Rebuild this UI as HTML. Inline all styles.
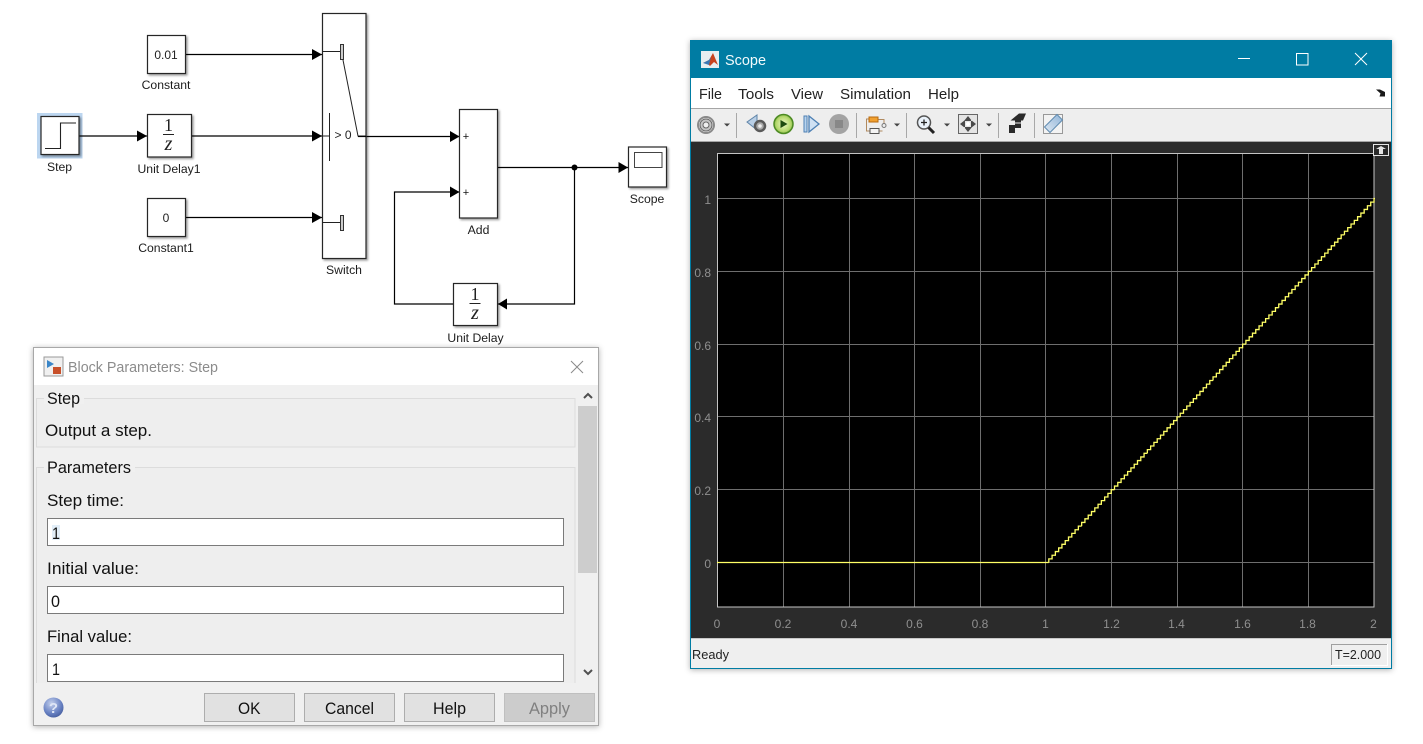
<!DOCTYPE html>
<html><head><meta charset="utf-8"><title>Scope</title>
<style>
html,body{margin:0;padding:0;background:#fff;width:1423px;height:744px;overflow:hidden}
svg{display:block}
text{font-family:"Liberation Sans",sans-serif}
.l{font-size:12.2px;fill:#1c1c1c;text-anchor:middle}
.w{stroke:#000;stroke-width:1.2;fill:none}
.b{fill:#fff;stroke:#262626;stroke-width:1.2;filter:url(#s)}
.g{stroke:#6e6e6e;stroke-width:1;fill:none}
.t{font-size:12px;fill:#8f8f8f}
.d{font-size:17px;fill:#111}
.m{font-size:15px;fill:#222}
.bt{fill:#e1e1e1;stroke:#adadad;stroke-width:1}
.sep{stroke:#a8a8a8;stroke-width:1}
.dd{fill:#444}
</style></head><body>
<svg width="1423" height="744" viewBox="0 0 1423 744" xmlns="http://www.w3.org/2000/svg">
<defs>
<filter id="s" x="-20%" y="-20%" width="150%" height="150%"><feDropShadow dx="1.5" dy="1.5" stdDeviation="1" flood-color="#000" flood-opacity=".4"/></filter>
<filter id="ws" x="-3%" y="-3%" width="106%" height="106%"><feDropShadow dx="0" dy="1" stdDeviation="3" flood-color="#000" flood-opacity=".3"/></filter>
<radialGradient id="pg" cx=".5" cy=".5" r=".6"><stop offset="0" stop-color="#eef7c8"/><stop offset=".65" stop-color="#b4d86c"/><stop offset="1" stop-color="#5f9a2a"/></radialGradient>
<radialGradient id="hg" cx=".4" cy=".3" r=".8"><stop offset="0" stop-color="#c4d0ec"/><stop offset=".6" stop-color="#6a83c4"/><stop offset="1" stop-color="#3d5596"/></radialGradient>
<linearGradient id="ru" x1="0" y1="1" x2="1" y2="0"><stop offset="0" stop-color="#dfe9f3"/><stop offset="1" stop-color="#8fb4d8"/></linearGradient>
<path id="st" d="M0 0v-3.64h3.285v-3.64h3.285v-3.64h3.285v-3.64h3.285v-3.64h3.285v-3.64h3.285v-3.64h3.285v-3.64h3.285v-3.64h3.285v-3.64h3.285"/>
<clipPath id="pc"><rect x="717" y="153" width="658" height="454"/></clipPath>
</defs>

<!-- selection highlight -->
<rect x="37" y="113" width="45.500" height="45.500" fill="#bcd6f0"/>

<!-- Simulink wires -->
<path class="w" d="M185 54.5H322M79 136H147M191 136H322M185 217.5H322M366 136.5H459M497 167.5H628M574.5 167.5V304H498M453 304H394.5V192H459"/>
<path d="M312 49L322 54.5L312 60ZM137 130.500L147 136L137 141.500ZM312 130.500L322 136L312 141.500ZM312 212L322 217.500L312 223ZM450 131L459.500 136.500L450 142ZM450 186.500L459.500 192L450 197.500ZM618.500 162L628 167.500L618.500 173ZM507 298.500L498 304L507 309.500Z" fill="#000"/>
<circle cx="574.5" cy="167.5" r="3" fill="#000"/>

<!-- Blocks -->
<rect class="b" x="41" y="116.500" width="38" height="38"/>
<path d="M45 148.500H60.500V123H76" fill="none" stroke="#222" stroke-width="1.100"/>
<text class="l" x="59.500" y="171">Step</text>

<rect class="b" x="147.500" y="35.500" width="38" height="38"/>
<text x="166" y="59" font-size="12" text-anchor="middle" fill="#222">0.01</text>
<text class="l" x="166" y="89">Constant</text>

<rect class="b" x="147.500" y="114.500" width="44" height="42.500"/>
<text x="168.500" y="131" font-size="18" text-anchor="middle" fill="#222" style="font-family:'Liberation Serif',serif">1</text>
<path d="M163 134.500H174" stroke="#222" stroke-width="1"/>
<text x="168.500" y="150" font-size="20" text-anchor="middle" fill="#222" font-style="italic" style="font-family:'Liberation Serif',serif">z</text>
<text class="l" x="169" y="173">Unit Delay1</text>

<rect class="b" x="147.500" y="198.500" width="38" height="38"/>
<text x="166" y="222" font-size="12" text-anchor="middle" fill="#222">0</text>
<text class="l" x="166" y="252">Constant1</text>

<rect class="b" x="322.500" y="13.500" width="43.500" height="245"/>
<path d="M322 51.500H340.500M322 222.500H340.500M329.500 113V161M322 136H329.500M343 60L358 136H366" fill="none" stroke="#222" stroke-width="1"/>
<rect x="340.500" y="44.500" width="3" height="15" fill="#ccc" stroke="#333" stroke-width="1"/>
<rect x="340.500" y="215.500" width="3" height="15" fill="#ccc" stroke="#333" stroke-width="1"/>
<text x="334.500" y="139" font-size="12" fill="#222">&gt; 0</text>
<text class="l" x="344" y="274">Switch</text>

<path d="M358 136.500H366" stroke="#000" stroke-width="1.200"/>

<rect class="b" x="459.500" y="109.500" width="38" height="108.500"/>
<text x="466" y="140" font-size="11" text-anchor="middle" fill="#111">+</text>
<text x="466" y="196" font-size="11" text-anchor="middle" fill="#111">+</text>
<text class="l" x="478.500" y="234">Add</text>

<rect class="b" x="628.500" y="147" width="38" height="40"/>
<rect x="634.500" y="152.500" width="27.500" height="15" fill="#fff" stroke="#444" stroke-width="1"/>
<text class="l" x="647" y="203">Scope</text>

<rect class="b" x="453.500" y="283.500" width="44" height="42"/>
<text x="475" y="300" font-size="18" text-anchor="middle" fill="#222" style="font-family:'Liberation Serif',serif">1</text>
<path d="M469.500 303.500H480.500" stroke="#222" stroke-width="1"/>
<text x="475" y="319" font-size="20" text-anchor="middle" fill="#222" font-style="italic" style="font-family:'Liberation Serif',serif">z</text>
<text class="l" x="475.500" y="342">Unit Delay</text>

<!-- Scope window -->
<g filter="url(#ws)"><rect x="690" y="40" width="702" height="629" fill="#007ca3"/></g>
<rect x="691" y="78" width="700" height="30" fill="#fff"/>
<rect x="691" y="108" width="700" height="1" fill="#a5a5a5"/>
<rect x="691" y="109" width="700" height="32" fill="#eeeeee"/>
<rect x="691" y="141" width="700" height="1" fill="#a5a5a5"/>
<rect x="691" y="142" width="700" height="496" fill="#2b2b2b"/>
<rect x="691" y="638" width="700" height="1" fill="#c8c8c8"/>
<rect x="691" y="639" width="700" height="29" fill="#efefef"/>

<!-- title -->
<rect x="701" y="51" width="18" height="17" fill="#e8eef0"/>
<path d="M703 63L709 60L713 53L718 65L714 62L710 66L707 63Z" fill="#c8431e"/>
<path d="M703 63L709 60L711 57L709 65Z" fill="#3a78b5"/>
<text x="725" y="65" font-size="15" fill="#f2fafc" textLength="41" lengthAdjust="spacingAndGlyphs">Scope</text>
<path d="M1238 58.500H1250" stroke="#fff" stroke-width="1"/>
<rect x="1296.500" y="53.500" width="11.500" height="11.500" fill="none" stroke="#fff" stroke-width="1"/>
<path d="M1355 53L1367 65M1367 53L1355 65" stroke="#fff" stroke-width="1"/>

<!-- menu -->
<text class="m" x="699" y="99" textLength="23" lengthAdjust="spacingAndGlyphs">File</text>
<text class="m" x="738" y="99" textLength="36" lengthAdjust="spacingAndGlyphs">Tools</text>
<text class="m" x="791" y="99" textLength="32" lengthAdjust="spacingAndGlyphs">View</text>
<text class="m" x="840" y="99" textLength="71" lengthAdjust="spacingAndGlyphs">Simulation</text>
<text class="m" x="928" y="99" textLength="31" lengthAdjust="spacingAndGlyphs">Help</text>
<path d="M1376 89.500H1380L1385 92V96.500H1379.500L1380.500 93.500Z" fill="#1a1a1a"/>

<!-- toolbar -->
<circle cx="706" cy="125" r="8" fill="none" stroke="#8a8a8a" stroke-width="2"/>
<circle cx="706" cy="125" r="6" fill="#c4c4c4" stroke="#666" stroke-width="1"/>
<circle cx="706" cy="125" r="3" fill="#f0f0f0" stroke="#666"/>
<path class="dd" d="M724 123.500H730L727 126.500Z"/>
<path class="sep" d="M736.500 113V138M856.500 113V138M906.500 113V138M998.500 113V138M1034.500 113V138"/>
<path d="M747 122L757 115V130Z" fill="#b9cfe6" stroke="#5f84a8"/>
<circle cx="760" cy="126" r="5" fill="#aaa" stroke="#5a5a5a" stroke-width="2.500"/>
<circle cx="760" cy="126" r="1.800" fill="#eee"/>
<circle cx="783.500" cy="124" r="9.500" fill="url(#pg)" stroke="#4c8a22" stroke-width="1.500"/>
<path d="M780.500 120L787.500 124L780.500 128Z" fill="#1e4a10"/>
<rect x="804" y="116" width="3" height="16" fill="#b8d3ee" stroke="#4d80b4"/>
<path d="M809 116L819 124L809 132Z" fill="#cfe1f3" stroke="#4d80b4" stroke-width="1.300"/>
<circle cx="839" cy="124" r="10" fill="#a3a3a3"/>
<rect x="835" y="120" width="8" height="8" fill="#888"/>
<path d="M869 119H866.500V131H870M878 119.500H884V123M879 131H882.500" fill="none" stroke="#b08a60"/>
<rect x="869" y="117" width="9" height="5" fill="#f0a030" stroke="#b86a10"/>
<rect x="870" y="128.500" width="9" height="5" fill="#f4f4f4" stroke="#555"/>
<circle cx="884" cy="125.500" r="2" fill="#eee" stroke="#777"/>
<path class="dd" d="M894 123.500H900L897 126.500Z"/>
<circle cx="924" cy="122.500" r="6.500" fill="#eaf2fa" stroke="#555" stroke-width="1.500"/>
<path d="M921 122.500H927M924 119.500V125.500" stroke="#222" stroke-width="1.300"/>
<path d="M928.500 127.500L934 133" stroke="#222" stroke-width="3"/>
<path class="dd" d="M944 123.500H950L947 126.500Z"/>
<rect x="958.500" y="114.500" width="19" height="19" fill="#e4e4e4" stroke="#666"/>
<path d="M968 116L972 121H964ZM968 132L972 127H964ZM960 124L965 120V128ZM976 124L971 120V128Z" fill="#4a4a4a"/>
<circle cx="968" cy="124" r="2" fill="#fff"/>
<path class="dd" d="M986 123.500H992L989 126.500Z"/>
<path d="M1009 133V125H1015V120.500H1010.500L1019 113.500H1026L1023 120.500H1021V128H1015V133Z" fill="#2a2a2a"/>
<path d="M1014 123H1026" stroke="#eee" stroke-width="1"/>
<rect x="1043.500" y="114.500" width="19" height="19" fill="#f3f3f3" stroke="#999"/>
<path d="M1044.500 127L1057 114.500L1062.500 120L1050 132.500Z" fill="url(#ru)" stroke="#5f8bb0"/>

<!-- plot -->
<rect x="717" y="153" width="657" height="454" fill="#000"/>
<path class="g" d="M783.500 153V607M849.500 153V607M914.500 153V607M980.500 153V607M1045.500 153V607M1111.500 153V607M1177.500 153V607M1242.500 153V607M1308.500 153V607M717 198.500H1374M717 271.500H1374M717 344.500H1374M717 416.500H1374M717 489.500H1374M717 562.500H1374"/>
<rect x="717.500" y="153.500" width="656.500" height="453.500" fill="none" stroke="#c4c4c4" stroke-width="1"/>
<path fill="none" stroke="#ffff66" stroke-width="1.300" d="M717 562.500H1048.800"/>
<g fill="none" stroke="#ffff66" stroke-width="1.300" clip-path="url(#pc)">
<use href="#st" x="1048.8" y="562.5"/>
<use href="#st" x="1081.65" y="526.1"/>
<use href="#st" x="1114.5" y="489.7"/>
<use href="#st" x="1147.35" y="453.3"/>
<use href="#st" x="1180.2" y="416.9"/>
<use href="#st" x="1213.05" y="380.5"/>
<use href="#st" x="1245.9" y="344.1"/>
<use href="#st" x="1278.75" y="307.7"/>
<use href="#st" x="1311.6" y="271.3"/>
<use href="#st" x="1344.45" y="234.9"/>
</g>
<g class="t" text-anchor="middle">
<text x="717" y="628">0</text><text x="783" y="628">0.2</text><text x="849" y="628">0.4</text><text x="914.500" y="628">0.6</text><text x="980" y="628">0.8</text><text x="1045.500" y="628">1</text><text x="1111.500" y="628">1.2</text><text x="1176.500" y="628">1.4</text><text x="1242.500" y="628">1.6</text><text x="1307.500" y="628">1.8</text><text x="1373.500" y="628">2</text>
</g>
<g class="t" text-anchor="end">
<text x="711" y="204">1</text><text x="711" y="277">0.8</text><text x="711" y="350">0.6</text><text x="711" y="422">0.4</text><text x="711" y="495">0.2</text><text x="711" y="568">0</text>
</g>
<rect x="1373.500" y="144.500" width="15" height="11" fill="#2b2b2b" stroke="#e6e6e6"/>
<path d="M1376 149L1381 146L1386 149H1383V154H1379V149Z" fill="#e6e6e6"/>

<!-- status -->
<text x="692" y="659" font-size="12.500" fill="#222" textLength="37" lengthAdjust="spacingAndGlyphs">Ready</text>
<path d="M1331.500 665V644.500H1387" fill="none" stroke="#a0a0a0"/>
<path d="M1331 665.500H1387.500V644" fill="none" stroke="#fff"/>
<text x="1335" y="659" font-size="13" fill="#222" textLength="46" lengthAdjust="spacingAndGlyphs">T=2.000</text>

<!-- Dialog -->
<g filter="url(#ws)"><rect x="33.500" y="347.500" width="565" height="378" fill="#f0f0f0" stroke="#a8a8a8"/></g>
<rect x="34" y="348" width="564" height="37" fill="#fff"/>
<rect x="44" y="357" width="19" height="19" fill="#f0f0f0" stroke="#999"/>
<path d="M47 360L54 364L47 368Z" fill="#3a86c8"/>
<rect x="53" y="367" width="8" height="7" fill="#c8502a"/>
<text x="68" y="372" font-size="15" fill="#8c8c8c" textLength="150" lengthAdjust="spacingAndGlyphs">Block Parameters: Step</text>
<path d="M571 361L583 373M583 361L571 373" stroke="#8a8a8a" stroke-width="1"/>

<!-- groups -->
<rect x="36.500" y="398.500" width="538.500" height="48.500" fill="#eeeeee" stroke="#dcdcdc"/>
<rect x="44" y="392" width="40" height="12" fill="#f0f0f0"/>
<text class="d" x="47" y="404" textLength="33" lengthAdjust="spacingAndGlyphs">Step</text>
<text class="d" x="45" y="436" textLength="107" lengthAdjust="spacingAndGlyphs">Output a step.</text>
<path d="M36.500 688V467.500H575V688" fill="#eeeeee" stroke="#dcdcdc"/>
<rect x="44" y="460" width="91" height="12" fill="#f0f0f0"/>
<text class="d" x="47" y="473" textLength="84" lengthAdjust="spacingAndGlyphs">Parameters</text>
<text class="d" x="47" y="506" textLength="77" lengthAdjust="spacingAndGlyphs">Step time:</text>
<rect x="47.500" y="518.500" width="516" height="27" fill="#fff" stroke="#7a7a7a"/>
<rect x="52" y="525" width="8" height="15" fill="#cfe3f4" opacity=".6"/>
<text class="d" x="52" y="539" textLength="8" lengthAdjust="spacingAndGlyphs">1</text>
<text class="d" x="47" y="574" textLength="92" lengthAdjust="spacingAndGlyphs">Initial value:</text>
<rect x="47.500" y="586.500" width="516" height="27" fill="#fff" stroke="#7a7a7a"/>
<text class="d" x="51" y="607" textLength="9" lengthAdjust="spacingAndGlyphs">0</text>
<text class="d" x="47" y="642" textLength="85" lengthAdjust="spacingAndGlyphs">Final value:</text>
<rect x="47.500" y="654.500" width="516" height="27" fill="#fff" stroke="#7a7a7a"/>
<text class="d" x="52" y="675" textLength="8" lengthAdjust="spacingAndGlyphs">1</text>
<rect x="34" y="683" width="564" height="42" fill="#f0f0f0"/>

<!-- scrollbar -->
<rect x="578" y="385" width="19" height="298" fill="#f0f0f0"/>
<rect x="578" y="406" width="19" height="167" fill="#cdcdcd"/>
<path d="M584 398L588 394L592 398M584 670L588 674L592 670" fill="none" stroke="#505050" stroke-width="2"/>

<!-- buttons -->
<circle cx="53.500" cy="707.500" r="10" fill="url(#hg)"/>
<text x="53.500" y="713" font-size="15" font-weight="bold" text-anchor="middle" fill="#dfe6f6">?</text>
<rect class="bt" x="204.500" y="693.500" width="90" height="28"/>
<rect class="bt" x="304.500" y="693.500" width="90" height="28"/>
<rect class="bt" x="404.500" y="693.500" width="90" height="28"/>
<rect x="504.500" y="693.500" width="90" height="28" fill="#cccccc" stroke="#bfbfbf"/>
<text class="d" x="238" y="714" textLength="22.500" lengthAdjust="spacingAndGlyphs">OK</text>
<text class="d" x="325" y="714" textLength="49" lengthAdjust="spacingAndGlyphs">Cancel</text>
<text class="d" x="433" y="714" textLength="33" lengthAdjust="spacingAndGlyphs">Help</text>
<text class="d" x="529" y="714" textLength="41" lengthAdjust="spacingAndGlyphs" style="fill:#808080">Apply</text>
</svg>
</body></html>
